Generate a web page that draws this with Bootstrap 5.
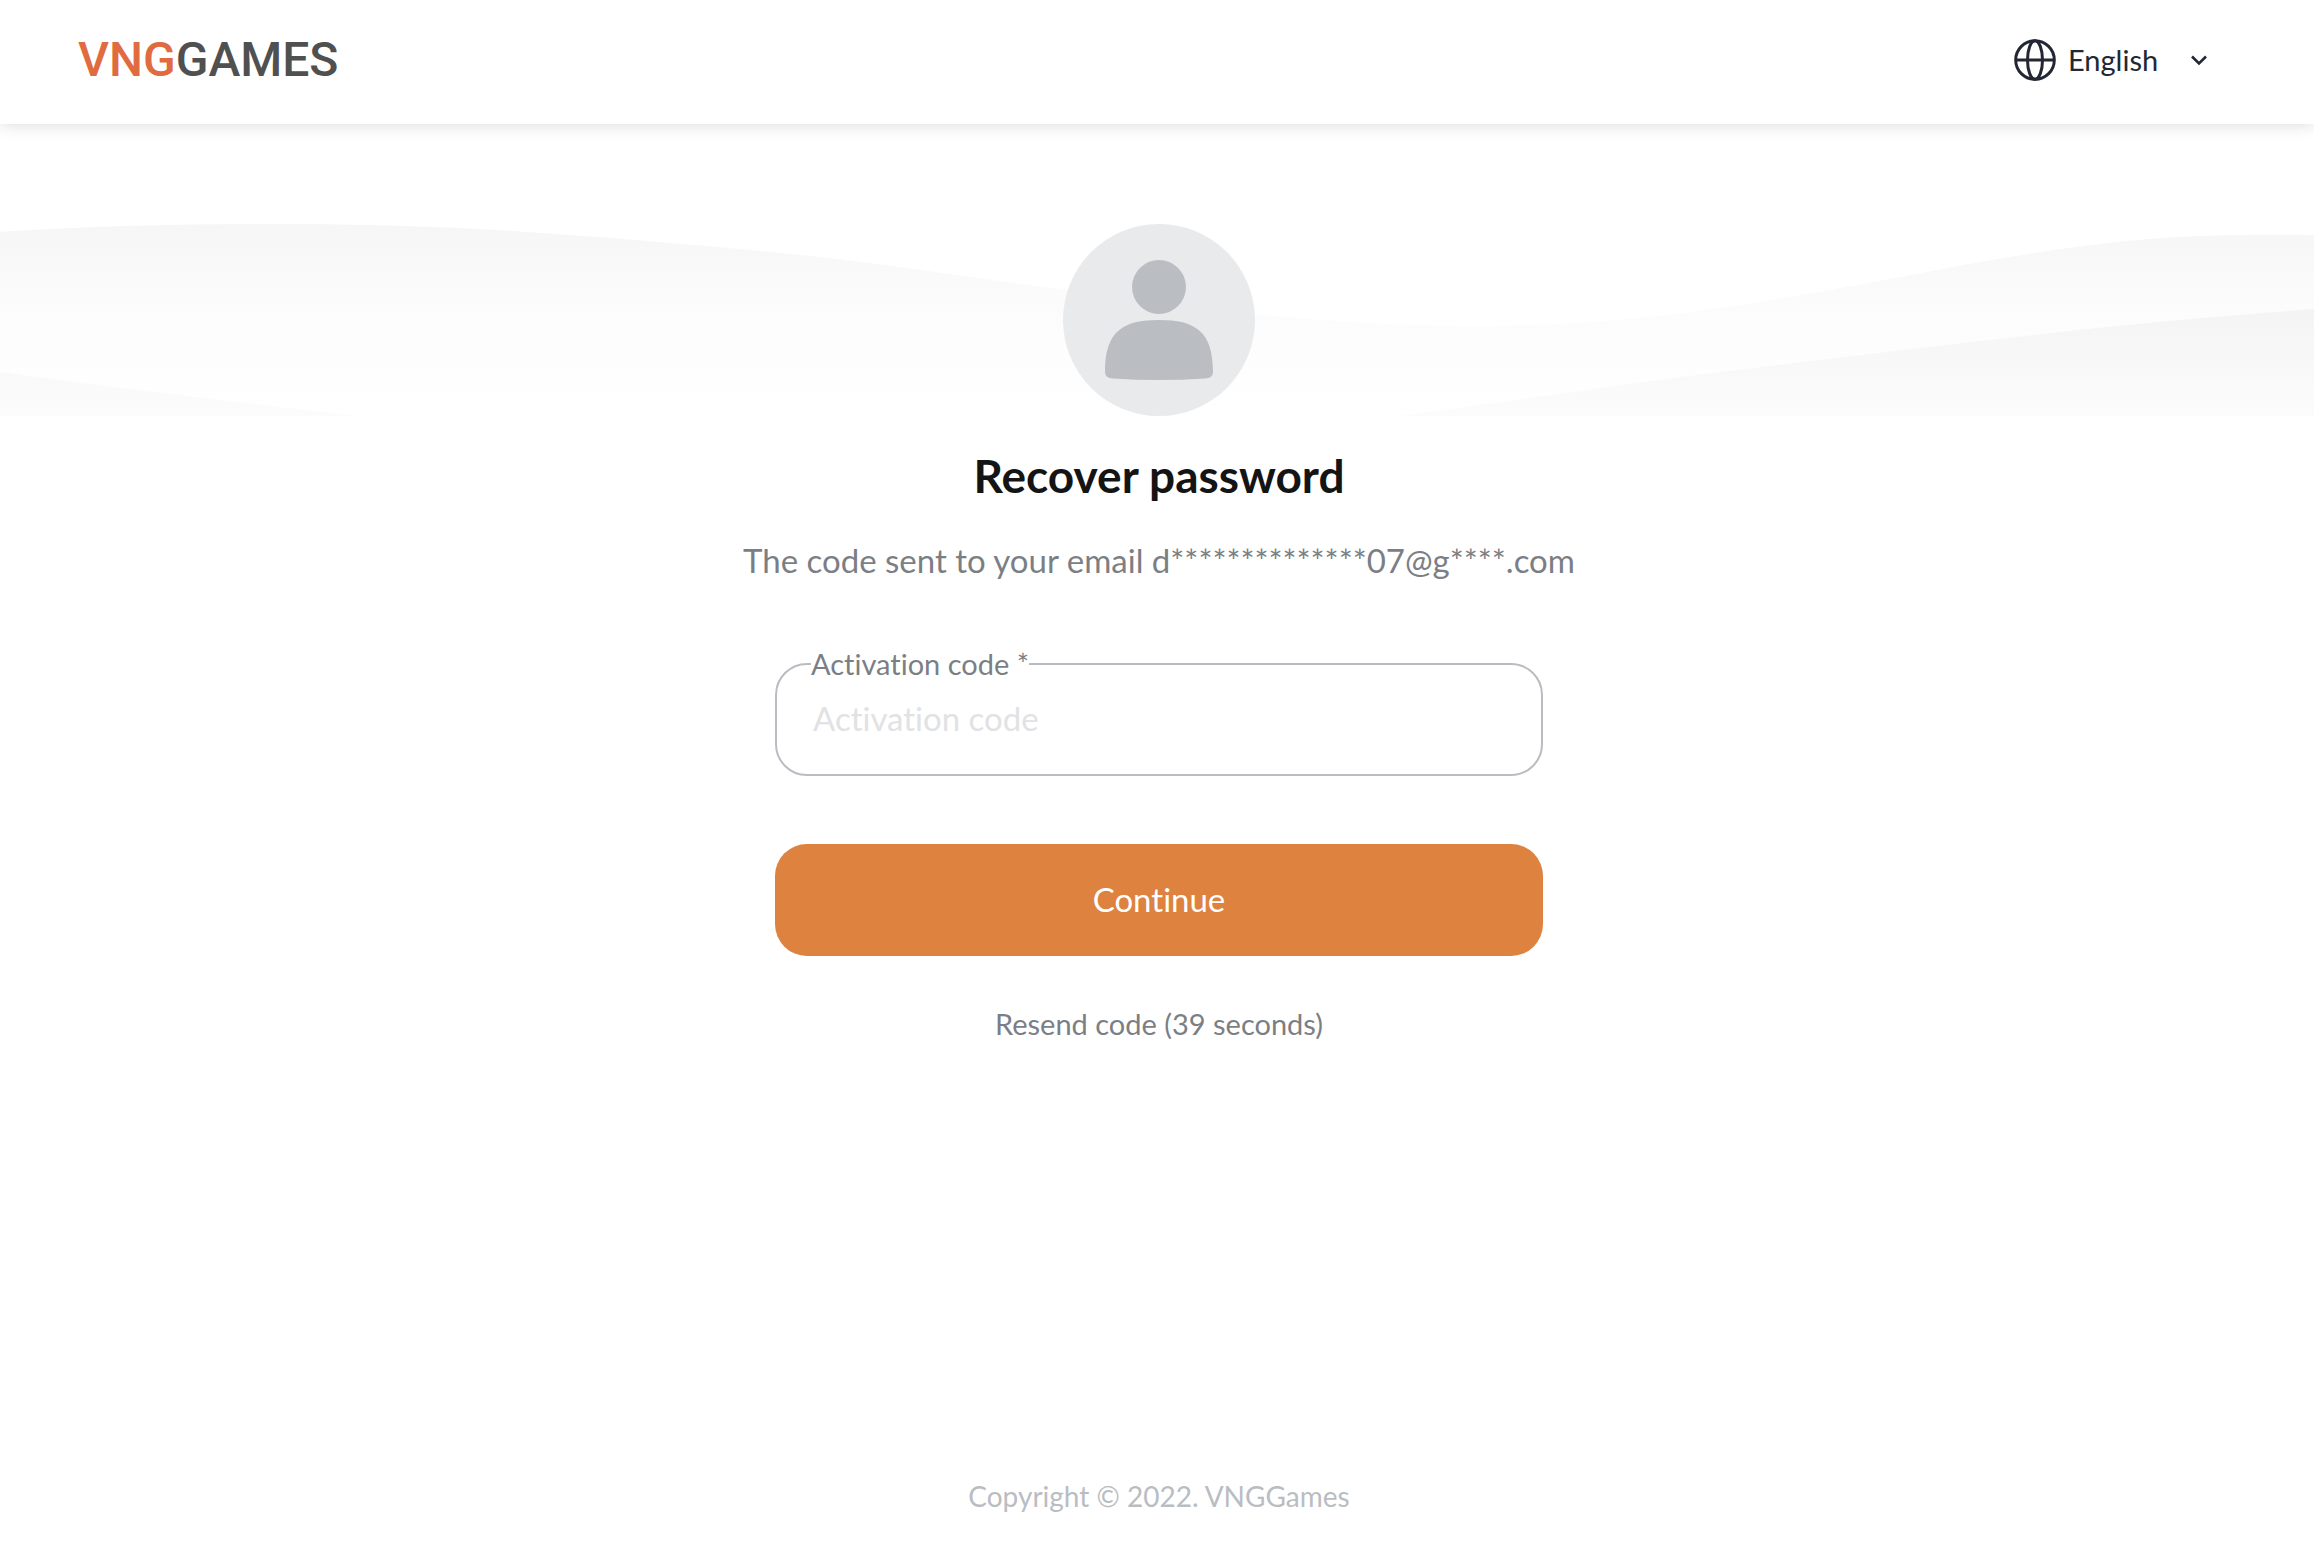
<!DOCTYPE html>
<html lang="en">
<head>
<meta charset="utf-8">
<meta name="viewport" content="width=device-width, initial-scale=1">
<title>Recover password - VNGGames</title>
<link href="https://cdn.jsdelivr.net/npm/bootstrap@5.3.0/dist/css/bootstrap.min.css" rel="stylesheet">
<style>
  body { font-family: Lato, sans-serif; color: #7b7f85; font-size: 29px; line-height: 40px; }
  body, input, button, select { font-variant-ligatures: none; }
  .top-bar { height: 124px; padding: 0 80px 4px 78px; box-shadow: 0 0 16px rgba(0, 0, 0, .16); z-index: 2; }
  .brand-logo { font: 500 48px/56px Roboto, sans-serif; color: #505050; text-decoration: none; }
  .brand-logo .brand-accent { color: #e16b40; }
  .lang-box { color: #222733; gap: 12px; }
  .lang-box select { appearance: none; border: 0; background: transparent; color: inherit; padding: 0; width: 166px; }
  .lang-chevron { right: 26px; pointer-events: none; }
  .backdrop-waves { top: 0; left: 0; width: 100%; height: 292px; z-index: -1; }
  .page-main { padding-top: 100px; }
  .page-title { font-size: 46px; line-height: 56px; color: #141414; margin: 32px 0 0; }
  .sent-note { font-size: 33px; line-height: 48px; margin: 32px 0 0; }
  .code-form { width: 768px; max-width: 100%; margin-top: 68px; }
  .code-field { border: 2px solid #b9bdc2; border-radius: 32px; height: 124px; padding: 0 34px; }
  .code-field legend { float: none; width: auto; font-size: 29px; line-height: 24px; height: 24px; margin: 0; padding: 0; }
  .code-field input { border: 0; outline: 0; background: transparent; width: 100%; height: 84px; font-size: 33px; padding: 0 2px; color: #141414; display: block; }
  .code-field input::placeholder { color: #e1e2e4; opacity: 1; }
  .btn-continue { --bs-btn-bg: #dd823f; --bs-btn-color: #fff; --bs-btn-hover-bg: #cc7433; --bs-btn-hover-color: #fff; --bs-btn-border-width: 0; --bs-btn-border-radius: 32px; --bs-btn-font-size: 33px; height: 112px; margin-top: 68px; }
  .resend-note { margin: 48px 0 0; }
  .page-foot { font-size: 28px; color: #b9bdc2; padding-bottom: 50px; }
</style>
</head>
<body class="d-flex flex-column min-vh-100 bg-white">
<header class="top-bar d-flex align-items-center justify-content-between bg-white position-relative">
  <a class="brand-logo" href="#"><span class="brand-accent">VNG</span>GAMES</a>
  <div class="lang-box d-flex align-items-center position-relative">
    <svg width="42" height="42" viewBox="0 0 42 42" fill="none" stroke="currentColor" stroke-width="3" aria-hidden="true">
      <circle cx="21" cy="21" r="19.300"/><ellipse cx="21" cy="21" rx="7.500" ry="19.300"/><path d="M1.500 21h39"/>
    </svg>
    <select aria-label="Language"><option>English</option><option>Tiếng Việt</option></select>
    <svg class="lang-chevron position-absolute" width="18" height="12" viewBox="0 0 18 12" fill="none" stroke="currentColor" stroke-width="2.600" aria-hidden="true"><path d="M2 2.500l7 7 7-7"/></svg>
  </div>
</header>
<main class="page-main d-flex flex-column align-items-center flex-grow-1 ps-1 text-center position-relative z-0">
  <svg class="backdrop-waves position-absolute" viewBox="0 124 2314 292" preserveAspectRatio="none" aria-hidden="true">
    <defs>
      <linearGradient id="waveBack" gradientUnits="userSpaceOnUse" x1="0" y1="224" x2="0" y2="416"><stop offset="0" stop-color="#f6f6f6"/><stop offset=".45" stop-color="#fcfcfc"/><stop offset="1" stop-color="#fff"/></linearGradient>
      <linearGradient id="waveFront" gradientUnits="userSpaceOnUse" x1="0" y1="309" x2="0" y2="416"><stop offset="0" stop-color="#f4f4f4"/><stop offset="1" stop-color="#fcfcfc"/></linearGradient>
    </defs>
    <path fill="url(#waveBack)" d="M0 232C90 226 180 224 280 224C370 224 460 227 544 233C640 240 730 248 812 256C900 266 980 279 1066 290C1130 300 1190 308 1255 314C1330 322 1400 326 1474 326C1530 326 1585 323 1629 319C1675 315 1720 308 1760 302C1830 291 1900 277 1969 264C2020 255 2065 248 2116 242C2175 236 2230 234 2314 235V416H0z"/>
    <path fill="url(#waveFront)" d="M0 372C50 379 95 385 148 391Q250 404 358 416H0zM1400 416C1490 404 1585 390 1673 378Q1785 364 1895 351Q2005 338 2116 326Q2215 316 2314 309V416z"/>
  </svg>
  <svg width="192" height="192" viewBox="0 0 192 192" role="img" aria-label="User avatar">
    <circle cx="96" cy="96" r="96" fill="#e9eaec"/>
    <circle cx="96" cy="63" r="27" fill="#babdc2"/>
    <path fill="#babdc2" d="M96 96C60 96 42 107 42 148Q42 154 50 154.500Q73 156 96 156T142 154.500Q150 154 150 148C150 107 132 96 96 96z"/>
  </svg>
  <h1 class="page-title fw-bold">Recover password</h1>
  <p class="sent-note">The code sent to your email d**************07@g****.com</p>
  <form class="code-form">
    <fieldset class="code-field text-start">
      <legend><label for="code">Activation code *</label></legend>
      <input id="code" type="text" placeholder="Activation code" autocomplete="one-time-code">
    </fieldset>
    <button class="btn btn-continue w-100" type="button">Continue</button>
  </form>
  <p class="resend-note">Resend code (39 seconds)</p>
</main>
<footer class="page-foot ps-1 text-center">Copyright © 2022. VNGGames</footer>
<script src="https://cdn.jsdelivr.net/npm/bootstrap@5.3.0/dist/js/bootstrap.bundle.min.js"></script>
</body>
</html>
